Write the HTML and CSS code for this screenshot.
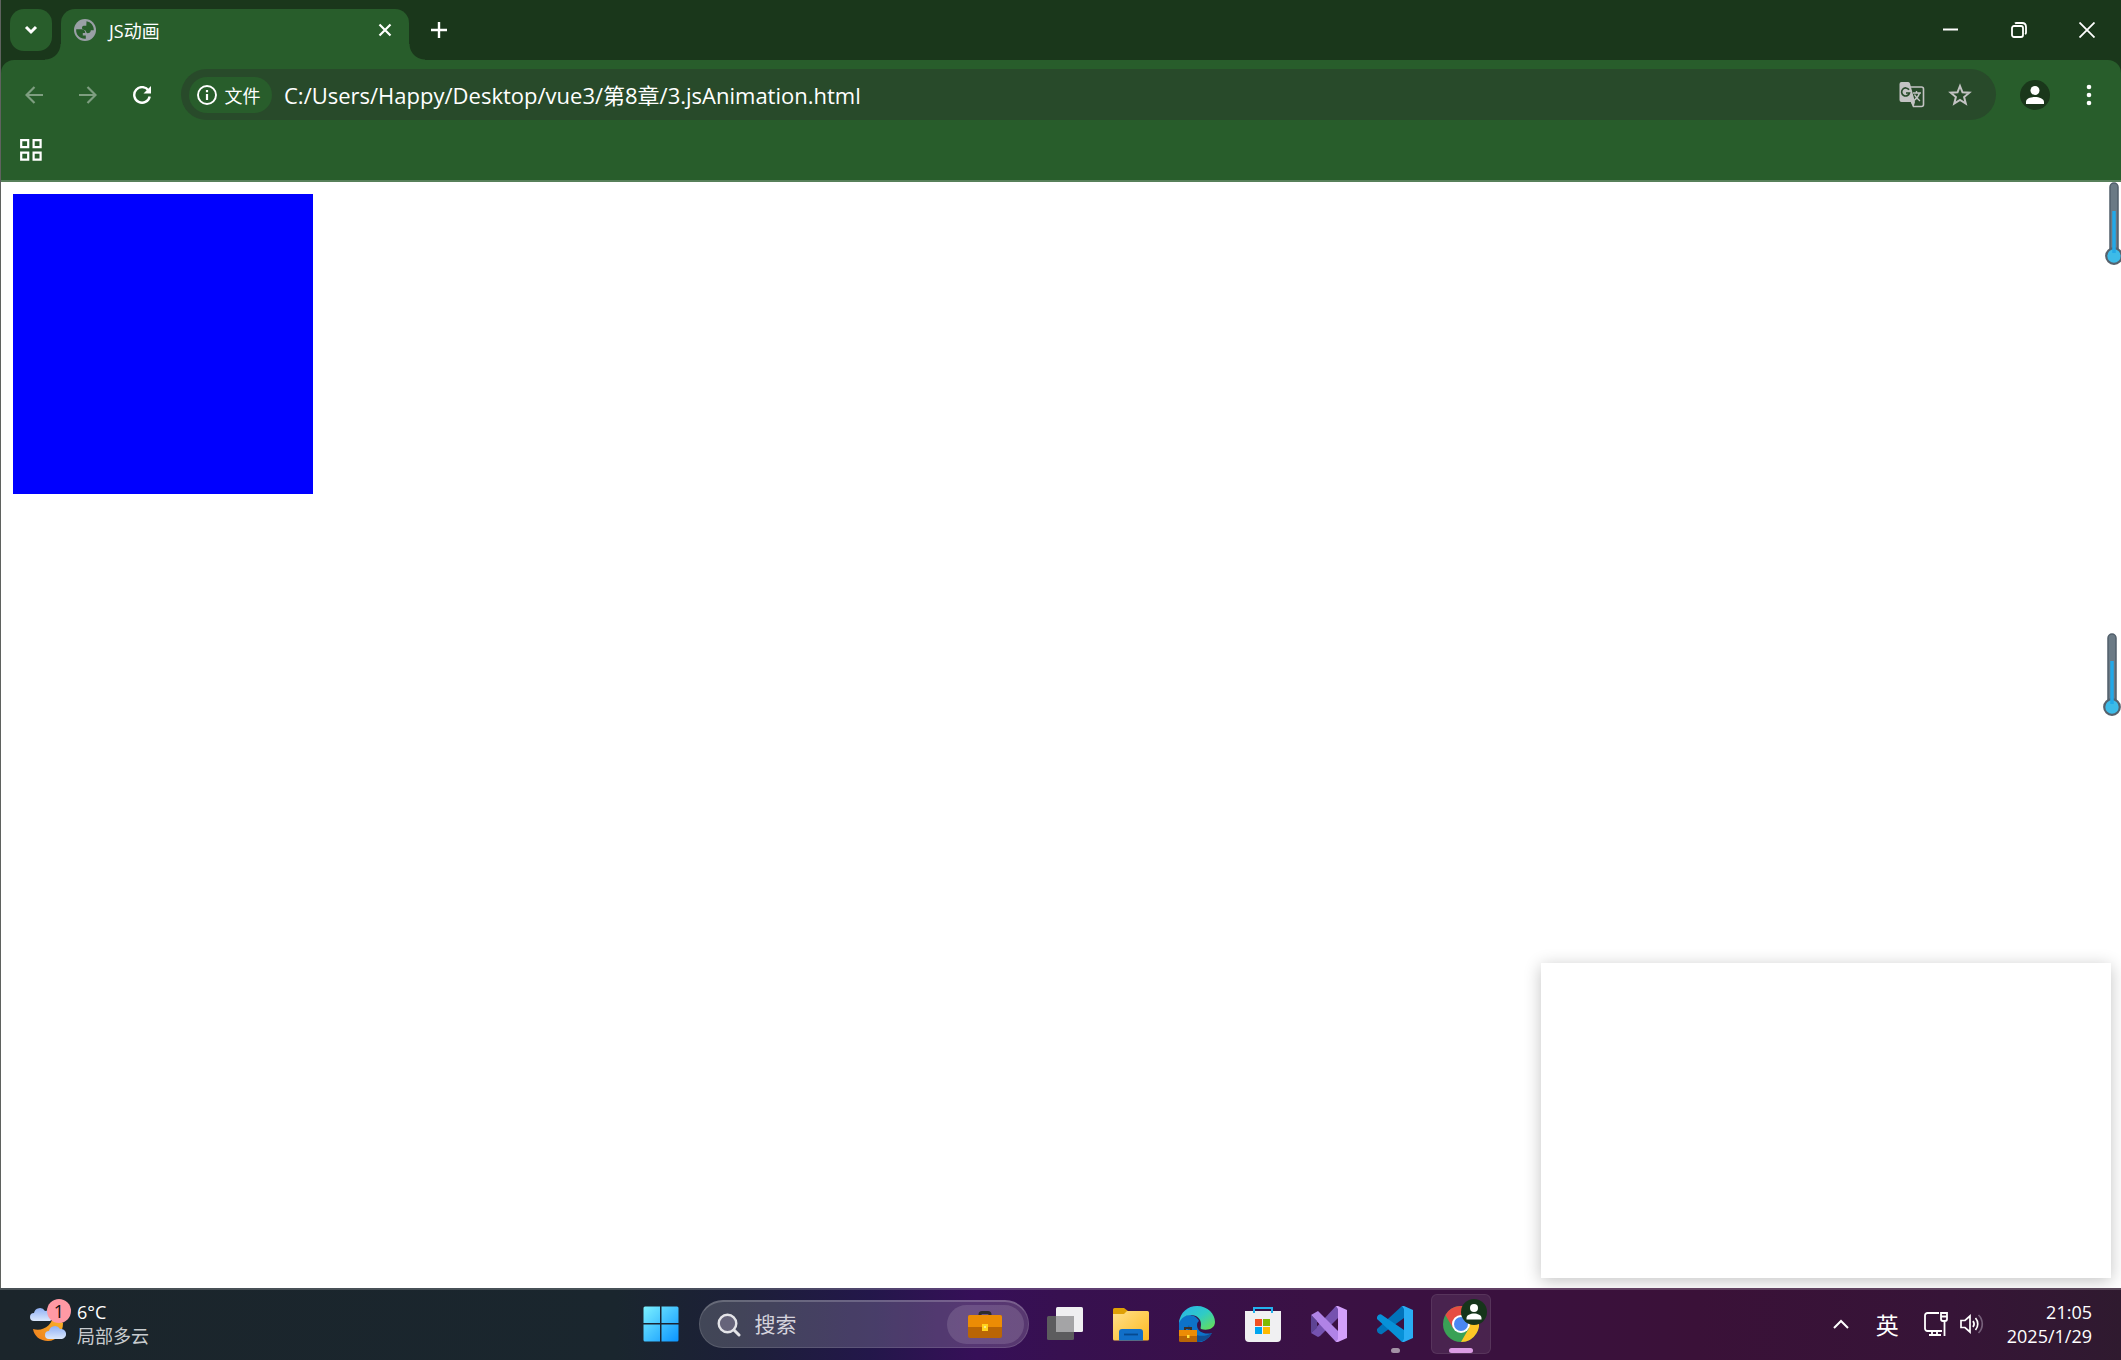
FILE: index.html
```html
<!DOCTYPE html>
<html lang="zh-CN">
<head>
    <meta charset="UTF-8">
    <meta name="viewport" content="width=device-width, initial-scale=1.0">
    <title>JS动画</title>
    <link rel="stylesheet" href="styles.css">
</head>
<body>
    <div class="window">
        <header class="titlebar">
            <button class="tab-search" aria-label="搜索标签页">
                <svg width="14" height="10" viewBox="0 0 14 10"><path d="M2 2l5 5 5-5" fill="none" stroke="#fff" stroke-width="3"/></svg>
            </button>
            <div class="tab">
                <svg width="22" height="22" viewBox="0 0 22 22">
                    <circle cx="11" cy="11" r="11" fill="#9aa0a6"/>
                    <path d="M2.200 10.200h5.300c2.300 0 3.700 1.200 3.700 3.800H8.800v2.500h3v3.200C6.500 20.300 1.500 16 2.200 10.200z" fill="#285d2b"/>
                    <path d="M12.500 2.200c4.500.8 7.400 4.500 7.300 9h-3c0 1.800-1.200 3-3.300 3-1.500 0-1.500-2.700-2.500-3-2-.5-3-1-3-2.500s1-2 2.500-2h1.800z" fill="#285d2b"/>
                </svg>
                <span class="tab-title">JS动画</span>
                <button class="tab-close" aria-label="关闭标签页">
                    <svg width="14" height="14" viewBox="0 0 14 14"><path d="M1.500 1.500l11 11M12.500 1.500l-11 11" stroke="#fff" stroke-width="2.200"/></svg>
                </button>
            </div>
            <button class="new-tab" aria-label="新标签页">
                <svg width="16" height="16" viewBox="0 0 16 16"><path d="M8 0v16M0 8h16" stroke="#fff" stroke-width="2.400"/></svg>
            </button>
            <div class="controls">
                <button aria-label="最小化"><svg width="16" height="16" viewBox="0 0 16 16"><path d="M0 7.500h15" stroke="#fff" stroke-width="2"/></svg></button>
                <button aria-label="还原"><svg width="16" height="16" viewBox="0 0 16 16" fill="none" stroke="#fff" stroke-width="1.800"><rect x="1" y="4" width="11" height="11" rx="2"/><path d="M4 1.500c.5-.5 1-.5 1.500-.5H11c2.500 0 4 1.500 4 4v5.500c0 .5-.2 1.200-.8 1.700"/></svg></button>
                <button aria-label="关闭"><svg width="16" height="16" viewBox="0 0 16 16"><path d="M.5.5l15 15M15.500.5l-15 15" stroke="#fff" stroke-width="1.800"/></svg></button>
            </div>
        </header>

        <div class="chrome-bars">
            <nav class="toolbar">
                <button class="tool" aria-label="后退"><svg width="18" height="18" viewBox="0 0 18 18" fill="none" stroke="#7e9e80" stroke-width="2.200"><path d="M18 9H1.500M9.500 1L1.500 9l8 8"/></svg></button>
                <button class="tool" aria-label="前进"><svg width="18" height="18" viewBox="0 0 18 18" fill="none" stroke="#7e9e80" stroke-width="2.200"><path d="M0 9h16.500M8.500 1l8 8-8 8"/></svg></button>
                <button class="tool" aria-label="重新加载"><svg width="18" height="18" viewBox="0 0 18 18"><path d="M15.500 4.500A7.800 7.800 0 1 0 16.700 10.500" fill="none" stroke="#fff" stroke-width="2.400"/><path d="M18 0v7.500h-7.500z" fill="#fff"/></svg></button>
                <div class="omnibox">
                    <button class="chip">
                        <svg width="20" height="20" viewBox="0 0 20 20"><circle cx="10" cy="10" r="9" fill="none" stroke="#fff" stroke-width="1.900"/><path d="M10 9v6M10 5v2.200" stroke="#fff" stroke-width="2.200"/></svg>
                        文件
                    </button>
                    <input class="url" type="text" aria-label="地址栏" value="C:/Users/Happy/Desktop/vue3/第8章/3.jsAnimation.html">
                    <button class="omni-btn" aria-label="翻译">
                        <svg width="26" height="26" viewBox="0 0 26 26">
                            <path d="M11 5h11.500a2 2 0 0 1 2 2v15.500a2 2 0 0 1-2 2h-8l-3-7" fill="none" stroke="#c3c3c3" stroke-width="1.600"/>
                            <path d="M2.500 0H9a2 2 0 0 1 2 1.500L16 20l-1.500 5-2.500-5H2.500A2 2 0 0 1 .5 18V2a2 2 0 0 1 2-2z" fill="#c3c3c3"/>
                            <path d="M10 7.800A4 4 0 1 0 10.500 11H7" fill="none" stroke="#284a2a" stroke-width="1.700"/>
                            <path d="M14 11h8M17.500 9v2M20.500 11c-.7 3-3 5.500-5.500 7.500M15.500 12.500c1 2.500 3 4.500 5.500 6.500" fill="none" stroke="#c3c3c3" stroke-width="1.400"/>
                        </svg>
                    </button>
                    <button class="omni-btn" aria-label="添加书签">
                        <svg width="24" height="24" viewBox="0 0 24 24"><path d="M12 3l2.500 6.300 6.800.4-5.200 4.300 1.700 6.600L12 17l-5.800 3.600L7.900 14 2.700 9.700l6.800-.4z" fill="none" stroke="#c3c3c3" stroke-width="2"/></svg>
                    </button>
                </div>
                <button class="tool" aria-label="用户"><svg width="30" height="30" viewBox="0 0 30 30"><circle cx="15" cy="15" r="15" fill="#1a371b"/><circle cx="15" cy="10.500" r="4.500" fill="#fff"/><path d="M6 24v-2c0-3.500 5-5 9-5s9 1.500 9 5v2z" fill="#fff"/></svg></button>
                <button class="tool" aria-label="菜单"><svg width="6" height="22" viewBox="0 0 6 22" fill="#fff"><circle cx="3" cy="3" r="2.300"/><circle cx="3" cy="11" r="2.300"/><circle cx="3" cy="19" r="2.300"/></svg></button>
            </nav>
            <div class="bookmarks">
                <button class="apps" aria-label="应用"><svg width="22" height="22" viewBox="0 0 22 22" fill="none" stroke="#fff" stroke-width="2.200"><path d="M1.200 1.200h7v7h-7zM13.600 1.200h7v7h-7zM1.200 13.600h7v7h-7zM13.600 13.600h7v7h-7z"/></svg></button>
            </div>
        </div>

        <main class="page">
            <div class="box"></div>
            <svg class="thermo thermo-top" width="18" height="84" viewBox="0 0 18 84">
                <rect x="5" y="1" width="8" height="72" rx="4" fill="#6b7a85" stroke="#525f6b" stroke-width="1.500"/>
                <circle cx="9" cy="74" r="7.800" fill="#3dbbe8" stroke="#56626d" stroke-width="2.200"/>
                <path d="M9 29v42" stroke="#23a9e8" stroke-width="3.500"/>
            </svg>
            <svg class="thermo thermo-middle" width="18" height="84" viewBox="0 0 18 84">
                <rect x="5" y="1" width="8" height="72" rx="4" fill="#6b7a85" stroke="#525f6b" stroke-width="1.500"/>
                <circle cx="9" cy="74" r="7.800" fill="#3dbbe8" stroke="#56626d" stroke-width="2.200"/>
                <path d="M9 28v43" stroke="#23a9e8" stroke-width="3.500"/>
            </svg>
            <div class="popup"></div>
        </main>
    </div>

    <footer class="taskbar">
        <button class="weather">
            <span class="weather-icon">
                <svg width="36" height="34" viewBox="0 0 36 34">
                    <defs>
                        <linearGradient id="cloud" x1="0" y1="0" x2="0" y2="1"><stop offset="0" stop-color="#8fb0f5"/><stop offset="1" stop-color="#dbe8fd"/></linearGradient>
                        <linearGradient id="moon" x1="0" y1="1" x2="1" y2="0"><stop offset="0" stop-color="#ee7d1d"/><stop offset="1" stop-color="#fbb829"/></linearGradient>
                    </defs>
                    <path d="M3 22c10 3 20-4 20-14l10 8c0 10-6 18-15 18C10 34 4 29 3 22z" fill="url(#moon)"/>
                    <path d="M4 14a4 4 0 0 1 0-8 6 6 0 0 1 11-2 5 5 0 0 1 5 10z" fill="url(#cloud)"/>
                    <path d="M19 32a4 4 0 0 1 0-8 6 6 0 0 1 11-2 5 5 0 0 1 2 10z" fill="url(#cloud)"/>
                </svg>
                <span class="badge">1</span>
            </span>
            <span class="two-lines">
                <span>6°C</span>
                <span class="dim">局部多云</span>
            </span>
        </button>

        <div class="apps-row">
            <button class="app" aria-label="开始">
                <svg width="36" height="36" viewBox="0 0 36 36">
                    <defs><linearGradient id="win" x1="0" y1="0" x2="1" y2="1"><stop offset="0" stop-color="#7cf1ff"/><stop offset="1" stop-color="#0a94ff"/></linearGradient></defs>
                    <path d="M2 .5h15v16.500H.5V2A1.500 1.500 0 0 1 2 .5zM18.500.5H34A1.500 1.500 0 0 1 35.500 2v15h-17zM.5 18.500H17v17H2A1.500 1.500 0 0 1 .5 34zM18.500 18.500h17V34a1.500 1.500 0 0 1-1.500 1.500H18.500z" fill="url(#win)"/>
                </svg>
            </button>
            <div class="search">
                <svg width="24" height="24" viewBox="0 0 24 24"><circle cx="10.500" cy="10.500" r="8.800" fill="#66647a" stroke="#e4e4e8" stroke-width="2.400"/><path d="M17 17l5 5" stroke="#e4e4e8" stroke-width="3" stroke-linecap="round"/></svg>
                <input type="text" placeholder="搜索" aria-label="搜索">
                <button class="search-pill" aria-label="搜索要点">
                    <svg width="34" height="28" viewBox="0 0 34 28">
                        <path d="M12 5V3.500a2 2 0 0 1 2-2h6a2 2 0 0 1 2 2V5" fill="none" stroke="#2e2b2b" stroke-width="3"/>
                        <rect y="4" width="34" height="23" rx="2" fill="#b96505"/>
                        <path d="M0 6a2 2 0 0 1 2-2h30a2 2 0 0 1 2 2v10H0z" fill="#ec8c05"/>
                        <rect x="14" y="13" width="6" height="7" fill="#ffd31e"/><rect x="16" y="15" width="2" height="2" fill="#f7ec8a"/>
                    </svg>
                </button>
            </div>
            <button class="app" aria-label="任务视图">
                <svg width="36" height="36" viewBox="0 0 36 36"><rect x="9" y="1" width="27" height="25" rx="1.500" fill="#efeff1"/><rect y="10" width="27" height="24" rx="1.500" fill="#5c5c5e"/><path d="M9 10h18v16H9z" fill="#a4a4a6"/></svg>
            </button>
            <button class="app" aria-label="文件资源管理器">
                <svg width="36" height="36" viewBox="0 0 36 36">
                    <defs><linearGradient id="folder" x1="0" y1="0" x2="1" y2="1"><stop offset="0" stop-color="#ffe08a"/><stop offset="1" stop-color="#fdba20"/></linearGradient></defs>
                    <path d="M0 10V3.500A1.500 1.500 0 0 1 1.500 2H11l4 3v5z" fill="#dfa006"/>
                    <path d="M0 8h11l3-3h20.500A1.500 1.500 0 0 1 36 6.500V33a1.500 1.500 0 0 1-1.500 1.500h-33A1.500 1.500 0 0 1 0 33z" fill="url(#folder)"/>
                    <path d="M6 34.500V26a3 3 0 0 1 3-3h18a3 3 0 0 1 3 3v8.500z" fill="#116fc8"/><path d="M11 28.500h14" stroke="#064a8f" stroke-width="1.800"/>
                </svg>
            </button>
            <button class="app" aria-label="Edge">
                <svg width="36" height="36" viewBox="0 0 36 36">
                    <defs><linearGradient id="edge" x1="0" y1="0" x2="1" y2="1"><stop offset="0" stop-color="#29b0ee"/><stop offset=".5" stop-color="#2fcbc6"/><stop offset="1" stop-color="#6de04a"/></linearGradient></defs>
                    <path d="M0 15v10a18 18 0 0 0 33 2c-7 2-15-1-15-8 0-3 2-4 2-4-4-8-16-8-20 0z" fill="#0d72c9"/>
                    <path d="M10 19c1 10 12 14 23 8-4 7-10 9-16 9C10 33 7 26 10 19z" fill="#114d92"/>
                    <path d="M0 17C1 6 9 0 18 0c11 0 18 8 18 16 0 7-8 9-14 7-1-1 0-2 0-5 0-5-4-9-10-9C6 9 2 12 0 17z" fill="url(#edge)"/>
                    <path d="M6 24v-2h6v2" fill="none" stroke="#3a302b" stroke-width="2"/><path d="M0 24h18v12H1.500A1.500 1.500 0 0 1 0 34.500z" fill="#b96505"/><path d="M0 24h18v6H0z" fill="#ec8c05"/><rect x="8" y="29" width="2.500" height="3" fill="#ffe03a"/>
                </svg>
            </button>
            <button class="app" aria-label="Microsoft Store">
                <svg width="36" height="36" viewBox="0 0 36 36"><path d="M0 5h36v27a4 4 0 0 1-4 4H4a4 4 0 0 1-4-4z" fill="#f0f0f2"/><path d="M9 7V2h18v5" fill="none" stroke="#23b2ee" stroke-width="2"/><path d="M10 13h7v7h-7z" fill="#f25022"/><path d="M18 13h7v7h-7z" fill="#7fba00"/><path d="M10 21h7v7h-7z" fill="#00a4ef"/><path d="M18 21h7v7h-7z" fill="#ffb900"/></svg>
            </button>
            <button class="app" aria-label="Visual Studio">
                <svg width="36" height="36" viewBox="0 0 36 36"><path d="M0 27l25-27 2 1v11L9 30l-2 1z" fill="#7552b0"/><path d="M0 9l7-4 20 20v11h-2z" fill="#b083e6"/><path d="M25 0h2l9 4v28l-9 4h-2l2-3V3z" fill="#d3a0fb"/><path d="M0 9l6 6v7l-6 5z" fill="#5d4393"/></svg>
            </button>
            <button class="app" aria-label="Visual Studio Code">
                <svg width="36" height="36" viewBox="0 0 36 36"><path d="M27 1v11L5 28c-2 1-6-2-5-5L25 0z" fill="#0173ba"/><path d="M27 35V24L5 9c-2-2-6 1-5 4l25 23z" fill="#0791d8"/><path d="M25 0h2l9 4v28l-9 4h-2l2-3V3z" fill="#29adf3"/></svg>
                <span class="dot"></span>
            </button>
            <button class="app app-active" aria-label="Chrome">
                <svg width="36" height="36" viewBox="0 0 36 36"><circle cx="18" cy="18" r="18" fill="#2a9a48"/><path d="M2.400 9A18 18 0 0 1 33.600 9H18l-7.800 13.500z" fill="#e43e32"/><path d="M33.600 9A18 18 0 0 1 18 36l7.800-13.500L18 9z" fill="#fdc314"/><circle cx="18" cy="18" r="9" fill="#fff"/><circle cx="18" cy="18" r="7" fill="#3b7df0"/></svg>
                <svg class="profile" width="26" height="26" viewBox="0 0 26 26"><circle cx="13" cy="13" r="13" fill="#16351b"/><circle cx="13" cy="9" r="4" fill="#fff"/><path d="M5.500 20.500V19c0-3 4-4.500 7.500-4.500s7.500 1.500 7.500 4.500v1.500z" fill="#fff"/></svg>
                <span class="dot dot-active"></span>
            </button>
        </div>

        <div class="tray">
            <button aria-label="显示隐藏的图标"><svg width="18" height="12" viewBox="0 0 18 12"><path d="M2 10l7-7 7 7" fill="none" stroke="#fff" stroke-width="2"/></svg></button>
            <button class="ime">英</button>
            <button class="system" aria-label="网络和音量">
                <svg width="24" height="26" viewBox="0 0 24 26" fill="none" stroke="#fff" stroke-width="1.800"><path d="M15 2H3.500A2.500 2.500 0 0 0 1 4.500v13A2.500 2.500 0 0 0 3.500 20H18M8 20v3.500M13 20v3.500M5 24h12"/><path d="M17 2h6v6a2 2 0 0 1-2 2h-2a2 2 0 0 1-2-2zM17 5.500h6M20.500 10v15"/></svg>
                <svg width="24" height="20" viewBox="0 0 24 20" fill="none" stroke="#fff" stroke-width="1.700"><path d="M1 6.500h4L10 2v16l-5-4.500H1z"/><path d="M13 7c1.500 2 1.500 4 0 6M15.500 4c3 3.500 3 8.500 0 12"/><path d="M18.500 1c5 5 5 13 0 18" stroke="#76607a"/></svg>
            </button>
            <button class="clock two-lines">
                <time>21:05</time>
                <time>2025/1/29</time>
            </button>
        </div>
    </footer>
</body>
</html>
```
FILE: styles.css
```css
* {
    box-sizing: border-box;
}
body {
    margin: 0;
    height: 100vh;
    display: flex;
    flex-direction: column;
    overflow: hidden;
    font-family: "Open Sans", "Noto Sans CJK SC", sans-serif;
    font-size: 18px;
    color: #fff;
    background: #fff;
}
button,
input {
    padding: 0;
    border: none;
    background: none;
    font: inherit;
    color: inherit;
    outline: none;
}
button {
    display: flex;
    align-items: center;
    justify-content: center;
}
svg {
    flex: none;
    display: block;
}

/* browser window */
.window {
    flex: 1;
    display: flex;
    flex-direction: column;
    border-left: 1px solid #5f625f;
    background: #1a371b;
}
.titlebar {
    display: flex;
    height: 60px;
    padding-left: 9px;
}
.tab-search {
    width: 42px;
    height: 42px;
    margin-top: 9px;
    border-radius: 14px;
    background: #285d2b;
}
.tab {
    position: relative;
    display: flex;
    align-items: center;
    width: 348px;
    margin: 9px 0 0 9px;
    padding: 0 14px 9px 13px;
    border-radius: 14px 14px 0 0;
    background: #285d2b;
}
/* curved feet of the active tab */
.tab::before,
.tab::after {
    content: "";
    position: absolute;
    bottom: 0;
    width: 16px;
    height: 16px;
}
.tab::before {
    left: -16px;
    background: radial-gradient(circle at 0 0, transparent 15px, #285d2b 16px);
}
.tab::after {
    right: -16px;
    background: radial-gradient(circle at 100% 0, transparent 15px, #285d2b 16px);
}
.tab-title {
    flex: 1;
    margin-left: 13px;
}
.tab-close {
    width: 20px;
    height: 20px;
}
.new-tab {
    width: 42px;
    height: 42px;
    margin: 9px 0 0 9px;
}
.controls {
    display: flex;
    margin-left: auto;
}
.controls button {
    width: 68px;
}
.chrome-bars {
    border-radius: 13px 13px 0 0;
    border-bottom: 2px solid #57805a;
    background: #285d2b;
}
.toolbar {
    display: flex;
    align-items: center;
    gap: 12px;
    height: 69px;
    padding: 0 11px 0 12px;
}
.tool {
    width: 42px;
    height: 42px;
}
.omnibox {
    flex: 1;
    display: flex;
    align-items: center;
    height: 51px;
    margin: 0 6px;
    padding: 0 23px 0 8px;
    border-radius: 26px;
    background: #284a2a;
}
.chip {
    gap: 8px;
    width: 83px;
    height: 36px;
    padding-right: 4px;
    border-radius: 18px;
    background: #285d2b;
}
.url {
    flex: 1;
    height: 36px;
    margin-left: 12px;
    padding-bottom: 2px;
    font-size: 22px;
}
.omni-btn {
    width: 26px;
    height: 36px;
    margin-left: 22px;
}
.bookmarks {
    display: flex;
    align-items: center;
    height: 51px;
    padding: 0 19px 9px;
}

/* page content */
.page {
    position: relative;
    flex: 1;
    padding: 12px;
    background: #fff;
}
.box {
    width: 300px;
    height: 300px;
    background: blue;
}
.thermo {
    position: absolute;
    right: -2px;
}
.thermo-top {
    top: 0;
}
.thermo-middle {
    top: 451px;
    right: 0;
}
.popup {
    position: absolute;
    right: 10px;
    bottom: 10px;
    width: 570px;
    height: 315px;
    background: #fff;
    box-shadow: 0 3px 16px rgba(0, 0, 0, 0.24);
}

/* taskbar */
.taskbar {
    position: relative;
    display: grid;
    grid-template-columns: 1fr auto 1fr;
    height: 72px;
    padding-bottom: 2px;
    border-top: 2px solid rgba(255, 255, 255, 0.2);
    background: linear-gradient(90deg, #1b252b 0%, #1a262e 29%, #1c1f38 35%, #23174a 41%, #360f58 46%, #371050 50%, #3a1144 62%, #3a1138 80%, #361437 92%, #2f1a2f 100%) border-box;
}
.weather {
    justify-self: start;
    padding-left: 30px;
    gap: 11px;
}
.weather-icon {
    position: relative;
}
.badge {
    position: absolute;
    top: -8px;
    left: 17px;
    width: 24px;
    height: 24px;
    border-radius: 50%;
    background: #ff99a4;
    color: #111;
    line-height: 24px;
}
.two-lines {
    display: flex;
    flex-direction: column;
    align-items: flex-start;
    line-height: 24px;
}
.dim {
    color: #c8cccf;
}
.apps-row {
    display: flex;
    align-items: center;
}
.app {
    position: relative;
    width: 66px;
    height: 60px;
}
.app-active::before {
    content: "";
    position: absolute;
    inset: 0 3px;
    border: 1px solid rgba(255, 255, 255, 0.08);
    border-radius: 6px;
    background: rgba(255, 255, 255, 0.08);
}
.profile {
    position: absolute;
    top: 5px;
    right: 7px;
}
.dot {
    position: absolute;
    bottom: 1px;
    left: 50%;
    width: 9px;
    height: 5px;
    margin-left: -4px;
    border-radius: 3px;
    background: #a392a6;
}
.dot-active {
    width: 24px;
    margin-left: -12px;
    background: #dc9ce4;
}
.search {
    display: flex;
    align-items: center;
    width: 330px;
    height: 48px;
    margin: 0 3px 0 5px;
    padding: 0 4px 0 17px;
    border: 1px solid rgba(255, 255, 255, 0.12);
    border-top: 2px solid rgba(255, 255, 255, 0.2);
    border-radius: 24px;
    background: rgba(255, 255, 255, 0.17);
}
.search input {
    flex: 1;
    min-width: 0;
    margin-left: 14px;
    padding-bottom: 2px;
    font-size: 21px;
}
.search input::placeholder {
    color: #d5d3dc;
}
.search-pill {
    width: 77px;
    height: 39px;
    border-radius: 20px;
    background: rgba(255, 255, 255, 0.13);
}
.tray {
    display: flex;
    align-items: center;
    justify-self: end;
    padding-right: 29px;
}
.ime {
    margin-left: 26px;
    font-size: 23px;
}
.system {
    margin-left: 25px;
    gap: 12px;
}
.clock {
    align-items: flex-end;
    margin-left: 23px;
}
```
